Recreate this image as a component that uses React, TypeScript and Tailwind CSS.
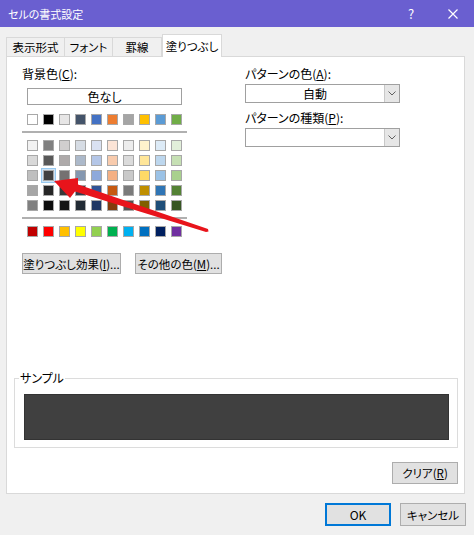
import React from "react";

const themeTop = ["#FFFFFF", "#000000", "#E7E6E6", "#44546A", "#4472C4", "#ED7D31", "#A5A5A5", "#FFC000", "#5B9BD5", "#70AD47"];

const tints = [
  ["#F2F2F2", "#808080", "#D0CECE", "#D6DCE4", "#D9E1F2", "#FCE4D6", "#EDEDED", "#FFF2CC", "#DDEBF7", "#E2EFDA"],
  ["#D9D9D9", "#595959", "#AEAAAA", "#ACB9CA", "#B4C6E7", "#F8CBAD", "#DBDBDB", "#FFE699", "#BDD7EE", "#C6E0B4"],
  ["#BFBFBF", "#404040", "#757171", "#8497B0", "#8EA9DB", "#F4B084", "#C9C9C9", "#FFD966", "#9BC2E6", "#A9D08E"],
  ["#A6A6A6", "#262626", "#3A3838", "#333F4F", "#305496", "#C65911", "#7B7B7B", "#BF8F00", "#2F75B5", "#548235"],
  ["#808080", "#0D0D0D", "#161616", "#222B35", "#203764", "#833C0C", "#525252", "#806000", "#1F4E78", "#375623"],
];

const standard = ["#C00000", "#FF0000", "#FFC000", "#FFFF00", "#92D050", "#00B050", "#00B0F0", "#0070C0", "#002060", "#7030A0"];

const Swatch = ({ color, selected }: { color: string; selected?: boolean }) => (
  <div className="relative w-[11px] h-[11px]">
    {selected && (
      <span className="absolute -inset-[2px] border border-[#99c9ef] bg-[#cce4f7]" />
    )}
    <span
      className="absolute inset-0 border border-[#a8a8a8]"
      style={{ backgroundColor: color }}
    />
  </div>
);

const SwatchRow = ({ colors, sel }: { colors: string[]; sel?: number }) => (
  <div className="flex gap-[5px]">
    {colors.map((c, i) => (
      <Swatch key={i} color={c} selected={sel === i} />
    ))}
  </div>
);

const Chevron = () => (
  <svg width="8" height="5" viewBox="0 0 8 5">
    <path d="M0.5 0.5 L4 4 L7.5 0.5" fill="none" stroke="#606060" strokeWidth="1" />
  </svg>
);

const Dropdown = ({ value }: { value?: string }) => (
  <div className="flex w-[155px] h-[19px] border border-[#a0a0a0] bg-white">
    <div className="flex-1 flex items-center justify-center">{value}</div>
    <div className="w-[15px] h-full flex items-center justify-center bg-[#e6e6e6] border-l border-[#c8c8c8]">
      <Chevron />
    </div>
  </div>
);

const btn = "flex items-center justify-center bg-[#e1e1e1] border border-[#adadad] whitespace-nowrap text-[11.5px]";

export default function App() {
  return (
    <div className="relative w-[474px] h-[535px] overflow-hidden bg-[#f0f0f0] text-[12px] leading-[14px] text-black font-['Noto_Sans_CJK_JP','Noto_Sans',sans-serif] [font-feature-settings:'palt']">
      {/* title bar */}
      <div className="h-[27px] bg-[#6a5fd0] flex items-center text-white">
        <div className="pl-[8px] flex-1 text-[11px]">セルの書式設定</div>
        <div className="w-[14px] text-center text-[13px] mr-[28px]">?</div>
        <div className="w-[14px] flex justify-center mr-[14px]">
          <svg width="10" height="10" viewBox="0 0 10 10">
            <path d="M0.5 0.5 L9.5 9.5 M9.5 0.5 L0.5 9.5" stroke="#fff" strokeWidth="1.2" />
          </svg>
        </div>
      </div>

      {/* tabs */}
      <div className="h-[29px] pl-[6px] flex items-end text-[11.5px]">
        <div className="w-[59px] h-[19px] flex items-center justify-center border border-b-0 border-[#d9d9d9] bg-[#f0f0f0]">表示形式</div>
        <div className="w-[48px] h-[19px] flex items-center justify-center border border-l-0 border-b-0 border-[#d9d9d9] bg-[#f0f0f0]">フォント</div>
        <div className="w-[49px] h-[19px] flex items-center justify-center border border-l-0 border-b-0 border-[#d9d9d9] bg-[#f0f0f0]">罫線</div>
        <div className="relative z-10 -mb-px w-[60px] h-[23px] flex items-center justify-center border border-b-0 border-[#d9d9d9] bg-white">塗りつぶし</div>
      </div>

      {/* panel */}
      <div className="ml-[6px] w-[459px] h-[438px] bg-white border border-[#d9d9d9] flex flex-col">
        <div className="flex">
          <div className="ml-[15px] w-[170px] flex flex-col">
            <div className="mt-[10px]">
              背景色(<span className="underline">C</span>):
            </div>
            <div className="ml-[5px] mt-[7px] w-[155px] h-[17px] border border-[#a0a0a0] flex items-center justify-center">色なし</div>
            <div className="ml-[5px] mt-[9px]">
              <SwatchRow colors={themeTop} />
            </div>
            <div className="mt-[6px] w-[165px] h-[2px] bg-[#b0b0b0]" />
            <div className="ml-[5px] mt-[7px] flex flex-col gap-[4px]">
              {tints.map((r, i) => (
                <SwatchRow key={i} colors={r} sel={i === 2 ? 1 : undefined} />
              ))}
            </div>
            <div className="mt-[6px] w-[165px] h-[2px] bg-[#b0b0b0]" />
            <div className="ml-[5px] mt-[7px]">
              <SwatchRow colors={standard} />
            </div>
          </div>
          <div className="ml-[53px] flex flex-col">
            <div className="mt-[10px]">
              パターンの色(<span className="underline">A</span>):
            </div>
            <div className="mt-[3px]">
              <Dropdown value="自動" />
            </div>
            <div className="mt-[8px]">
              パターンの種類(<span className="underline">P</span>):
            </div>
            <div className="mt-[3px]">
              <Dropdown />
            </div>
          </div>
        </div>

        <div className="ml-[15px] mt-[16px] flex gap-[14px]">
          <div className={`${btn} w-[99px] h-[21px]`}>
            <span>塗りつぶし効果(<span className="underline">I</span>)...</span>
          </div>
          <div className={`${btn} w-[87px] h-[21px]`}>
            <span>その他の色(<span className="underline">M</span>)...</span>
          </div>
        </div>

        <div className="relative ml-[7px] mt-[104px] w-[444px] h-[70px] border border-[#dcdcdc]">
          <span className="absolute -top-[8px] left-[4px] bg-white px-[1px]">サンプル</span>
          <div className="ml-[9px] mt-[15px] w-[425px] h-[46px] bg-[#404040] border border-[#333333]" />
        </div>

        <div className="mt-[14px] mr-[6px] self-end">
          <div className={`${btn} w-[66px] h-[22px]`}>
            <span>クリア(<span className="underline">R</span>)</span>
          </div>
        </div>
      </div>

      {/* footer */}
      <div className="mt-[9px] pr-[8px] flex justify-end gap-[9px]">
        <div className="w-[66px] h-[23px] flex items-center justify-center bg-[#e1e1e1] border border-[#0078d7] shadow-[inset_0_0_0_1px_#0078d7]">OK</div>
        <div className={`${btn} w-[66px] h-[23px]`}>キャンセル</div>
      </div>

      {/* annotation arrow */}
      <svg className="absolute inset-0 pointer-events-none" width="474" height="535" viewBox="0 0 474 535">
        <polygon
          points="54,181 78,178 78,184.5 208,229 208.5,231.5 206,232 75,191.5 70,198"
          fill="#e8141b"
        />
      </svg>
    </div>
  );
}
